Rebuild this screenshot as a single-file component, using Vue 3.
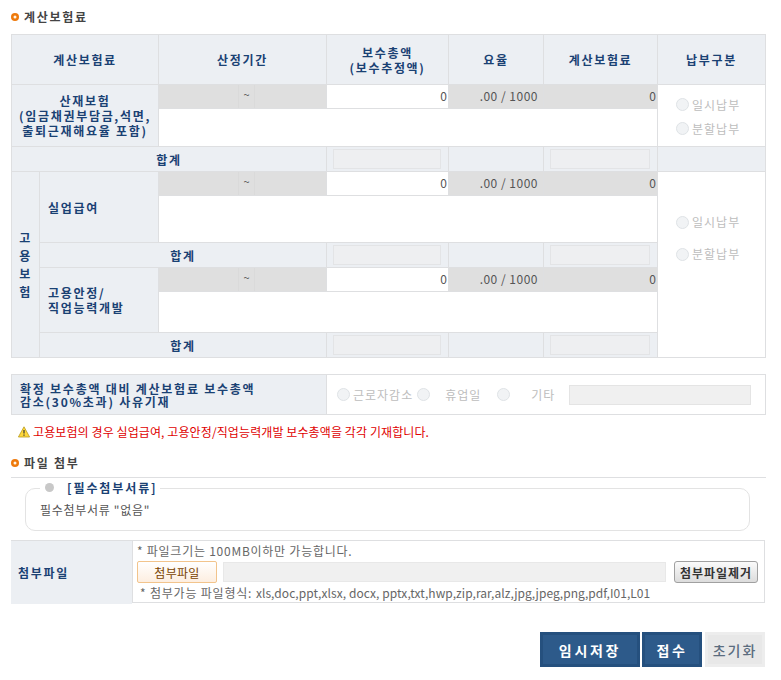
<script setup>
</script>

<template>
  <div class="page">
    <h2 class="title">
      <svg class="bullet" width="8" height="8" viewBox="0 0 8 8"><circle cx="4" cy="4" r="4" fill="#ee7a0c" /><circle cx="4" cy="4" r="1.5" fill="#fff6e8" /></svg>
      계산보험료
    </h2>

    <table class="grid main">
      <colgroup>
        <col class="c0" /><col class="c1" /><col class="c2" /><col class="c3" /><col class="c4" /><col class="c5" /><col class="c6" />
      </colgroup>
      <tbody>
        <tr class="rh">
          <th colspan="2">계산보험료</th>
          <th>산정기간</th>
          <th>보수총액<br />(보수추정액)</th>
          <th>요율</th>
          <th>계산보험료</th>
          <th>납부구분</th>
        </tr>
        <tr class="ri">
          <th colspan="2" rowspan="2">산재보험<br />(임금채권부담금,석면,<br />출퇴근재해요율 포함)</th>
          <td class="gray tilde"><span>~</span></td>
          <td class="num">0</td>
          <td class="gray rate">.00 / 1000</td>
          <td class="gray num">0</td>
          <td rowspan="2" class="pay">
            <label class="radio dis"><input type="radio" disabled />일시납부</label>
            <label class="radio dis"><input type="radio" disabled />분할납부</label>
          </td>
        </tr>
        <tr class="r38"><td colspan="4"></td></tr>
        <tr class="rt">
          <th colspan="3">합계</th>
          <th><span class="box"></span></th>
          <th></th>
          <th><span class="box"></span></th>
          <th></th>
        </tr>
        <tr class="ri">
          <th rowspan="6" class="vert">고<br />용<br />보<br />험</th>
          <th rowspan="2" class="left">실업급여</th>
          <td class="gray tilde"><span>~</span></td>
          <td class="num">0</td>
          <td class="gray rate">.00 / 1000</td>
          <td class="gray num">0</td>
          <td rowspan="6" class="pay wide">
            <label class="radio dis"><input type="radio" disabled />일시납부</label>
            <label class="radio dis"><input type="radio" disabled />분할납부</label>
          </td>
        </tr>
        <tr class="r47"><td colspan="4"></td></tr>
        <tr class="rt">
          <th colspan="2">합계</th>
          <th><span class="box"></span></th>
          <th></th>
          <th><span class="box"></span></th>
        </tr>
        <tr class="ri">
          <th rowspan="2" class="left">고용안정/<br />직업능력개발</th>
          <td class="gray tilde"><span>~</span></td>
          <td class="num">0</td>
          <td class="gray rate">.00 / 1000</td>
          <td class="gray num">0</td>
        </tr>
        <tr class="r41"><td colspan="4"></td></tr>
        <tr class="rt">
          <th colspan="2">합계</th>
          <th><span class="box"></span></th>
          <th></th>
          <th><span class="box"></span></th>
        </tr>
      </tbody>
    </table>

    <div class="reason">
      <div class="reason-label">확정 보수총액 대비 계산보험료 보수총액<br />감소(30%초과) 사유기재</div>
      <div class="reason-body">
        <label class="radio dis"><input type="radio" disabled />근로자감소</label>
        <label class="radio dis r2"><input type="radio" disabled /><span>휴업일</span></label>
        <label class="radio dis r3"><input type="radio" disabled /><span>기타</span></label>
        <span class="etc"></span>
      </div>
    </div>

    <p class="warn">
      <svg width="12" height="12" viewBox="0 0 12 12"><path d="M6 .8 11.6 11H.4z" fill="#ffd83a" stroke="#b89a20" stroke-width=".8" /><path d="M6 4v3.6M6 8.6v1.2" stroke="#333" stroke-width="1.2" /></svg>
      고용보험의 경우 실업급여, 고용안정/직업능력개발 보수총액을 각각 기재합니다.
    </p>

    <h2 class="title file-title">
      <svg class="bullet" width="8" height="8" viewBox="0 0 8 8"><circle cx="4" cy="4" r="4" fill="#ee7a0c" /><circle cx="4" cy="4" r="1.5" fill="#fff6e8" /></svg>
      파일 첨부
    </h2>

    <div class="req-wrap">
      <fieldset class="req">
        <legend><i class="dot"></i>[필수첨부서류]</legend>
        필수첨부서류 "없음"
      </fieldset>
    </div>

    <div class="attach">
      <div class="attach-label">첨부파일</div>
      <div class="attach-body">
        <div class="a1">* 파일크기는 100MB이하만 가능합니다.</div>
        <div class="a2">
          <button class="pick" type="button">첨부파일</button>
          <span class="filebox"></span>
          <button class="remove" type="button">첨부파일제거</button>
        </div>
        <div class="a3"><span class="a3k">* 첨부가능 파일형식:</span> <span class="a3l">xls,doc,ppt,xlsx, docx, pptx,txt,hwp,zip,rar,alz,jpg,jpeg,png,pdf,I01,L01</span></div>
      </div>
    </div>

    <div class="actions">
      <button class="act blue b1" type="button">임시저장</button>
      <button class="act blue b2" type="button">접수</button>
      <button class="act reset" type="button">초기화</button>
    </div>
  </div>
</template>

<style>
html, body { margin: 0; background: #fff; }
</style>

<style scoped>
.page {
  width: 781px;
  height: 680px;
  box-sizing: border-box;
  padding: 8px 16px 0 11px;
  font-family: "Noto Sans CJK KR", "Liberation Sans", sans-serif;
  font-size: 12px;
  color: #666;
  overflow: hidden;
}
.title {
  margin: 0 0 8px;
  height: 18px;
  line-height: 18px;
  font-size: 12px;
  font-weight: 700;
  color: #444;
  display: flex;
  align-items: center;
  gap: 5px;
  letter-spacing: 1.7px;
}
.bullet { flex: none; }
.grid {
  border-collapse: collapse;
  table-layout: fixed;
  width: 754px;
}
.c0 { width: 28px; }
.c1 { width: 119px; }
.c2 { width: 168px; }
.c3 { width: 122px; }
.c4 { width: 95px; }
.c5 { width: 114px; }
.c6 { width: 108px; }
.grid th, .grid td {
  border: 1px solid #dedfe1;
  padding: 0;
  box-sizing: border-box;
}
.grid th {
  background: #eceff3;
  color: #1a4173;
  font-weight: 700;
  text-align: center;
  line-height: 15px;
  letter-spacing: 1.7px;
}
.rh { height: 50px; }
.ri { height: 24px; }
.r38 { height: 38px; }
.r47 { height: 47px; }
.r41 { height: 41px; }
.rt { height: 25px; }
.grid .left { text-align: left; padding-left: 8px; line-height: 15px; }
.grid .vert { line-height: 18px; }
.gray { background: #dfdfdf; color: #555; }
.tilde { text-align: center; padding-left: 8px !important; font-size: 11px; vertical-align: top; }
.tilde span {
  display: inline-block;
  box-sizing: border-box;
  width: 17px;
  height: 23px;
  line-height: 19px;
  border-left: 1px solid #dadada;
  border-right: 1px solid #dadada;
}
.ri .num, .ri .rate { vertical-align: top; line-height: 22px; }
.num { text-align: right; padding-right: 1px !important; color: #555; }
.rate { text-align: right; padding-right: 5px !important; white-space: nowrap; letter-spacing: .5px; }
.box {
  display: block;
  height: 20px;
  margin: 0 7px 0 6px;
  background: #eeeff1;
  border: 1px solid #e3e4e6;
  box-sizing: border-box;
}
.pay { text-align: left; padding-left: 18px !important; vertical-align: middle; }
.radio {
  display: flex;
  align-items: center;
  gap: 3px;
  height: 24px;
  line-height: 24px;
  white-space: nowrap;
}
.dis { color: #bdbdbd; letter-spacing: 1px; }
.radio input {
  appearance: none;
  -webkit-appearance: none;
  width: 13px;
  height: 13px;
  margin: 0;
  flex: none;
  border: 1px solid #dfe3e6;
  border-radius: 50%;
  background: #f1f3f5;
  box-sizing: border-box;
}
.grid .pay:not(.wide) { padding-top: 2px !important; }
.grid .wide { vertical-align: top; padding-top: 38px !important; }
.wide .radio + .radio { margin-top: 8px; }
.reason {
  display: flex;
  margin-top: 16px;
  height: 41px;
  width: 755px;
  box-sizing: border-box;
  border: 1px solid #dedfe1;
}
.reason-label {
  width: 315px;
  flex: none;
  box-sizing: border-box;
  padding: 7px 0 0 8px;
  background: #eceff3;
  border-right: 1px solid #dedfe1;
  color: #1a4173;
  font-weight: 700;
  line-height: 13px;
  letter-spacing: 1.75px;
  white-space: nowrap;
}
.reason-body {
  display: flex;
  align-items: center;
  padding-left: 10px;
  flex: 1;
}
.reason-body .r2 { margin-left: 4px; }
.reason-body .r2 span { margin-left: 12px; margin-right: 16px; }
.reason-body .r3 span { margin-left: 18px; margin-right: 14px; }
.etc {
  width: 182px;
  height: 20px;
  box-sizing: border-box;
  background: #f0f0f0;
  border: 1px solid #e4e4e4;
}
.warn {
  margin: 8px 0 0 7px;
  height: 18px;
  line-height: 18px;
  display: flex;
  align-items: center;
  gap: 3px;
  color: #e00000;
  white-space: nowrap;
  letter-spacing: .1px;
}
.file-title { margin: 13px 0 0; }
.req-wrap {
  margin-top: 5px;
  width: 755px;
  height: 63px;
  box-sizing: border-box;
  border-top: 1px solid #dedfe1;
  padding: 4px 16px 0 14px;
}
.req {
  margin: 0;
  height: 49px;
  box-sizing: border-box;
  border: 1px solid #e3e3e3;
  border-radius: 10px;
  padding: 8px 14px 0;
  color: #555;
  line-height: 16px;
  letter-spacing: .7px;
}
.req legend {
  padding: 0 2px 0 5px;
  margin-left: 0;
  color: #1a4173;
  font-weight: 700;
  line-height: 12px;
  letter-spacing: 1.9px;
}
.dot {
  display: inline-block;
  width: 9px;
  height: 9px;
  border-radius: 50%;
  background: #c8c8c8;
  margin-right: 13px;
  vertical-align: 1px;
}
.attach {
  display: flex;
  width: 754px;
  height: 64px;
}
.attach-label {
  width: 121px;
  flex: none;
  box-sizing: border-box;
  padding: 0 0 0 7px;
  background: #eceff3;
  border-top: 1px solid #dedfe1;
  color: #1a4173;
  font-weight: 700;
  display: flex;
  align-items: center;
  letter-spacing: 1.7px;
}
.attach-body {
  flex: 1;
  height: 63px;
  box-sizing: border-box;
  border: 1px solid #dedfe1;
  padding-left: 4px;
}
.a1 { height: 20px; line-height: 20px; letter-spacing: .75px; }
.a2 { display: flex; align-items: center; height: 22px; }
.a3 { height: 20px; line-height: 20px; margin-left: 3px; white-space: nowrap; }
.a3k { letter-spacing: .8px; }
.a3l { letter-spacing: .05px; margin-left: 1px; }
.pick {
  width: 80px;
  height: 22px;
  padding: 0;
  box-sizing: border-box;
  border: 1px solid #f2c48c;
  border-radius: 2px;
  background: linear-gradient(#fff, #fdeee0);
  color: #7a4300;
  font: inherit;
  letter-spacing: .3px;
}
.filebox {
  width: 443px;
  height: 20px;
  margin-left: 6px;
  box-sizing: border-box;
  background: #f0f0f0;
  border: 1px solid #e8e8e8;
}
.remove {
  width: 84px;
  height: 22px;
  margin-left: 8px;
  padding: 0;
  box-sizing: border-box;
  border: 1px solid #a0a0a0;
  border-radius: 3px;
  background: linear-gradient(#fafafa, #dcdcdc);
  color: #333;
  font: inherit;
  font-weight: 700;
  letter-spacing: 1px;
}
.actions {
  display: flex;
  justify-content: flex-end;
  width: 754px;
  margin-top: 28px;
}
.act {
  height: 35px;
  padding: 0;
  box-sizing: border-box;
  font-family: inherit;
  font-size: 14px;
  letter-spacing: 2.7px;
}
.blue {
  border: 3px solid #25507e;
  background: #2d5a8a;
  color: #fff;
  font-weight: 700;
}
.b1 { width: 100px; }
.b2 { width: 60px; margin-left: 2px; }
.reset {
  width: 60px;
  margin-left: 3px;
  border: 3px solid #ededed;
  background: #e8e8e8;
  color: #5b6d7f;
  font-weight: 500;
  letter-spacing: 2px;
}
</style>
